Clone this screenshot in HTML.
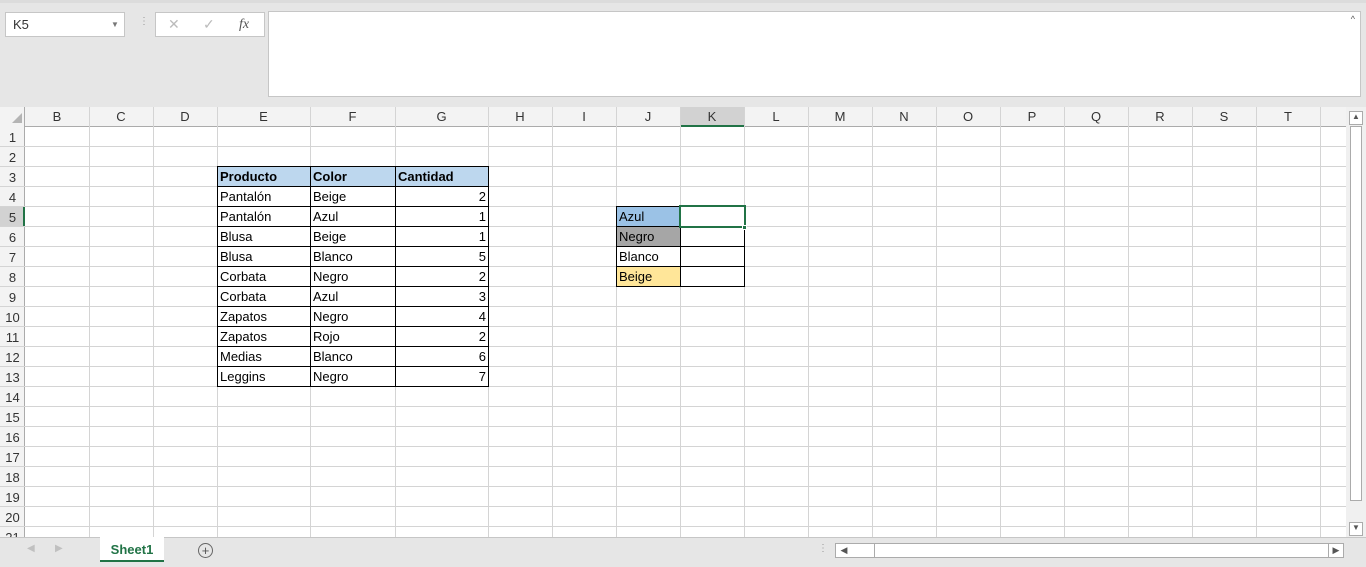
<!DOCTYPE html><html><head><meta charset="utf-8"><style>
*{margin:0;padding:0;box-sizing:border-box}
body{width:1366px;height:567px;overflow:hidden;background:#e6e6e6;font-family:"Liberation Sans",sans-serif;position:relative}
.a{position:absolute}
.vl{position:absolute;top:107px;height:430px;width:1px;background:#d4d4d4}
.hl{position:absolute;left:0;width:1346px;height:1px;background:#d4d4d4}
.ch{position:absolute;top:107px;height:20px;font-size:13px;color:#333;text-align:center;line-height:19px}
.rh{position:absolute;left:0;width:25px;font-size:13px;color:#333;text-align:center;height:20px;line-height:21px}
.c{position:absolute;height:21px;font-size:13px;line-height:20px;padding:0 2px;border:1px solid #000;color:#000;white-space:nowrap}
.r{text-align:right}
</style></head><body>
<div class="a" style="left:0;top:0;width:1366px;height:3px;background:#dcdcdc"></div>
<div class="a" style="left:5px;top:12px;width:120px;height:25px;background:#fff;border:1px solid #c6c6c6;font-size:13px;line-height:23px;padding-left:7px;color:#333">K5<span class="a" style="left:105px;top:0;font-size:8px;color:#777">▼</span></div>
<div class="a" style="left:139px;top:16px;font-size:10px;color:#999">⋮</div>
<div class="a" style="left:155px;top:12px;width:110px;height:25px;background:#fff;border:1px solid #c6c6c6;color:#bbb;font-size:14px;line-height:23px"><span class="a" style="left:12px">✕</span><span class="a" style="left:47px">✓</span><span class="a" style="left:83px;color:#555;font-family:'Liberation Serif',serif;font-style:italic">fx</span></div>
<div class="a" style="left:268px;top:11px;width:1093px;height:86px;background:#fff;border:1px solid #c6c6c6"><span class="a" style="right:5px;top:2px;font-size:9px;color:#555">^</span></div>
<div class="a" style="left:0;top:107px;width:1346px;height:430px;background:#fff"></div>
<div class="a" style="left:0;top:107px;width:1346px;height:20px;background:#f3f3f3;border-bottom:1px solid #ababab"></div>
<div class="a" style="left:0;top:107px;width:25px;height:430px;background:#f3f3f3;border-right:1px solid #ababab"></div>
<div class="a" style="left:680px;top:107px;width:64px;height:20px;background:#d2d2d2;border-bottom:2px solid #217346"></div>
<div class="a" style="left:0;top:207px;width:25px;height:20px;background:#d2d2d2;border-right:2px solid #217346"></div>
<div class="a" style="left:12px;top:113px;width:0;height:0;border-left:10px solid transparent;border-bottom:10px solid #b4b4b4"></div>
<div class="vl" style="left:89px"></div><div class="vl" style="left:153px"></div><div class="vl" style="left:217px"></div><div class="vl" style="left:310px"></div><div class="vl" style="left:395px"></div><div class="vl" style="left:488px"></div><div class="vl" style="left:552px"></div><div class="vl" style="left:616px"></div><div class="vl" style="left:680px"></div><div class="vl" style="left:744px"></div><div class="vl" style="left:808px"></div><div class="vl" style="left:872px"></div><div class="vl" style="left:936px"></div><div class="vl" style="left:1000px"></div><div class="vl" style="left:1064px"></div><div class="vl" style="left:1128px"></div><div class="vl" style="left:1192px"></div><div class="vl" style="left:1256px"></div><div class="vl" style="left:1320px"></div>
<div class="hl" style="top:146px"></div><div class="hl" style="top:166px"></div><div class="hl" style="top:186px"></div><div class="hl" style="top:206px"></div><div class="hl" style="top:226px"></div><div class="hl" style="top:246px"></div><div class="hl" style="top:266px"></div><div class="hl" style="top:286px"></div><div class="hl" style="top:306px"></div><div class="hl" style="top:326px"></div><div class="hl" style="top:346px"></div><div class="hl" style="top:366px"></div><div class="hl" style="top:386px"></div><div class="hl" style="top:406px"></div><div class="hl" style="top:426px"></div><div class="hl" style="top:446px"></div><div class="hl" style="top:466px"></div><div class="hl" style="top:486px"></div><div class="hl" style="top:506px"></div><div class="hl" style="top:526px"></div>
<div class="ch" style="left:25px;width:64px">B</div><div class="ch" style="left:89px;width:64px">C</div><div class="ch" style="left:153px;width:64px">D</div><div class="ch" style="left:217px;width:93px">E</div><div class="ch" style="left:310px;width:85px">F</div><div class="ch" style="left:395px;width:93px">G</div><div class="ch" style="left:488px;width:64px">H</div><div class="ch" style="left:552px;width:64px">I</div><div class="ch" style="left:616px;width:64px">J</div><div class="ch" style="left:680px;width:64px">K</div><div class="ch" style="left:744px;width:64px">L</div><div class="ch" style="left:808px;width:64px">M</div><div class="ch" style="left:872px;width:64px">N</div><div class="ch" style="left:936px;width:64px">O</div><div class="ch" style="left:1000px;width:64px">P</div><div class="ch" style="left:1064px;width:64px">Q</div><div class="ch" style="left:1128px;width:64px">R</div><div class="ch" style="left:1192px;width:64px">S</div><div class="ch" style="left:1256px;width:64px">T</div>
<div class="rh" style="top:127px">1</div><div class="rh" style="top:147px">2</div><div class="rh" style="top:167px">3</div><div class="rh" style="top:187px">4</div><div class="rh" style="top:207px">5</div><div class="rh" style="top:227px">6</div><div class="rh" style="top:247px">7</div><div class="rh" style="top:267px">8</div><div class="rh" style="top:287px">9</div><div class="rh" style="top:307px">10</div><div class="rh" style="top:327px">11</div><div class="rh" style="top:347px">12</div><div class="rh" style="top:367px">13</div><div class="rh" style="top:387px">14</div><div class="rh" style="top:407px">15</div><div class="rh" style="top:427px">16</div><div class="rh" style="top:447px">17</div><div class="rh" style="top:467px">18</div><div class="rh" style="top:487px">19</div><div class="rh" style="top:507px">20</div><div class="rh" style="top:527px;height:10px;overflow:hidden">21</div>
<div class="c" style="left:217px;top:166px;width:94px;background:#bdd7ee;font-weight:bold">Producto</div>
<div class="c" style="left:310px;top:166px;width:86px;background:#bdd7ee;font-weight:bold">Color</div>
<div class="c" style="left:395px;top:166px;width:94px;background:#bdd7ee;font-weight:bold">Cantidad</div>
<div class="c" style="left:217px;top:186px;width:94px">Pantalón</div><div class="c" style="left:310px;top:186px;width:86px">Beige</div><div class="c r" style="left:395px;top:186px;width:94px">2</div>
<div class="c" style="left:217px;top:206px;width:94px">Pantalón</div><div class="c" style="left:310px;top:206px;width:86px">Azul</div><div class="c r" style="left:395px;top:206px;width:94px">1</div>
<div class="c" style="left:217px;top:226px;width:94px">Blusa</div><div class="c" style="left:310px;top:226px;width:86px">Beige</div><div class="c r" style="left:395px;top:226px;width:94px">1</div>
<div class="c" style="left:217px;top:246px;width:94px">Blusa</div><div class="c" style="left:310px;top:246px;width:86px">Blanco</div><div class="c r" style="left:395px;top:246px;width:94px">5</div>
<div class="c" style="left:217px;top:266px;width:94px">Corbata</div><div class="c" style="left:310px;top:266px;width:86px">Negro</div><div class="c r" style="left:395px;top:266px;width:94px">2</div>
<div class="c" style="left:217px;top:286px;width:94px">Corbata</div><div class="c" style="left:310px;top:286px;width:86px">Azul</div><div class="c r" style="left:395px;top:286px;width:94px">3</div>
<div class="c" style="left:217px;top:306px;width:94px">Zapatos</div><div class="c" style="left:310px;top:306px;width:86px">Negro</div><div class="c r" style="left:395px;top:306px;width:94px">4</div>
<div class="c" style="left:217px;top:326px;width:94px">Zapatos</div><div class="c" style="left:310px;top:326px;width:86px">Rojo</div><div class="c r" style="left:395px;top:326px;width:94px">2</div>
<div class="c" style="left:217px;top:346px;width:94px">Medias</div><div class="c" style="left:310px;top:346px;width:86px">Blanco</div><div class="c r" style="left:395px;top:346px;width:94px">6</div>
<div class="c" style="left:217px;top:366px;width:94px">Leggins</div><div class="c" style="left:310px;top:366px;width:86px">Negro</div><div class="c r" style="left:395px;top:366px;width:94px">7</div>
<div class="c" style="left:616px;top:206px;width:65px;background:#9bc2e6">Azul</div><div class="c" style="left:680px;top:206px;width:65px"></div>
<div class="c" style="left:616px;top:226px;width:65px;background:#a6a6a6">Negro</div><div class="c" style="left:680px;top:226px;width:65px"></div>
<div class="c" style="left:616px;top:246px;width:65px">Blanco</div><div class="c" style="left:680px;top:246px;width:65px"></div>
<div class="c" style="left:616px;top:266px;width:65px;background:#ffe699">Beige</div><div class="c" style="left:680px;top:266px;width:65px"></div>
<div class="a" style="left:679px;top:205px;width:67px;height:23px;border:2px solid #217346"></div>
<div class="a" style="left:742px;top:225px;width:5px;height:5px;background:#217346;border:1px solid #fff"></div>
<div class="a" style="left:1346px;top:107px;width:20px;height:430px;background:#f0f0f0"></div>
<div class="a" style="left:1349px;top:111px;width:14px;height:14px;background:#fff;border:1px solid #ababab;font-size:8px;text-align:center;color:#555">▲</div>
<div class="a" style="left:1350px;top:126px;width:12px;height:375px;background:#fff;border:1px solid #ababab"></div>
<div class="a" style="left:1349px;top:522px;width:14px;height:14px;background:#fff;border:1px solid #ababab;font-size:8px;text-align:center;color:#555">▼</div>
<div class="a" style="left:0;top:537px;width:1366px;height:30px;background:#e6e6e6;border-top:1px solid #c6c6c6"></div>
<div class="a" style="left:27px;top:543px;font-size:10px;color:#c0c0c0">◀</div><div class="a" style="left:55px;top:543px;font-size:10px;color:#c0c0c0">▶</div>
<div class="a" style="left:100px;top:537px;width:64px;height:25px;background:#fff;border-bottom:2px solid #217346;color:#217346;font-weight:bold;font-size:13px;text-align:center;line-height:26px">Sheet1</div>
<div class="a" style="left:198px;top:543px;width:15px;height:15px;border:1px solid #666;border-radius:50%;text-align:center;font-size:13px;line-height:13px;color:#555">+</div>
<div class="a" style="left:818px;top:543px;font-size:10px;color:#999">⋮</div>
<div class="a" style="left:835px;top:543px;width:509px;height:15px;background:#fff;border:1px solid #ababab"></div>
<div class="a" style="left:836px;top:544px;width:16px;height:13px;font-size:9px;color:#555;text-align:center;line-height:13px">◀</div>
<div class="a" style="left:874px;top:544px;width:455px;height:13px;background:#fff;border-left:1px solid #ababab;border-right:1px solid #ababab"></div>
<div class="a" style="left:1328px;top:544px;width:16px;height:13px;font-size:9px;color:#555;text-align:center;line-height:13px">▶</div>
</body></html>
